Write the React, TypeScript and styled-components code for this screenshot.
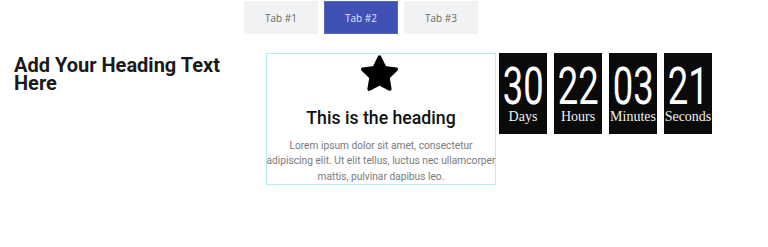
import * as React from 'react';
import styled, { createGlobalStyle } from 'styled-components';

const GlobalStyle = createGlobalStyle`
  html, body {
    margin: 0;
    padding: 0;
    background: #fff;
    font-family: Roboto, "Liberation Sans", sans-serif;
  }
`;

const Page = styled.div`
  width: 768px;
  height: 247px;
  overflow: hidden;
`;

const TabBar = styled.div`
  display: flex;
  gap: 6px;
  padding: 1px 0 0 244px;
`;

const Tab = styled.div<{ $active?: boolean }>`
  width: 74px;
  height: 33px;
  box-sizing: border-box;
  display: flex;
  align-items: center;
  justify-content: center;
  font-family: "Open Sans", sans-serif;
  font-size: 10px;
  color: ${p => (p.$active ? '#e4e6f4' : '#6a6a6a')};
  background: ${p => (p.$active ? '#3f51b5' : '#f1f2f4')};
  border: 1px solid ${p => (p.$active ? '#5565c0' : '#f1f2f4')};
`;

const Content = styled.div`
  display: flex;
  padding-top: 19px;
`;

const HeadingCol = styled.div`
  flex: 0 0 266px;
  box-sizing: border-box;
  padding: 3px 20px 0 14px;
`;

const MainHeading = styled.h2`
  margin: 0;
  font-size: 20px;
  line-height: 18px;
  font-weight: 700;
  color: #1a1a1a;
`;

const IconBox = styled.div`
  flex: 0 0 230px;
  height: 132px;
  box-sizing: border-box;
  border: 1px solid #b9ecfa;
  display: flex;
  flex-direction: column;
  align-items: center;
  text-align: center;
`;

const StarIcon = styled.svg`
  width: 39px;
  height: 39px;
  margin-left: -4px;
`;

const BoxTitle = styled.h3`
  margin: 14px 0 0;
  font-size: 17.7px;
  line-height: 22px;
  font-weight: 500;
  color: #111;
`;

const BoxText = styled.p`
  margin: 9px -4px 0;
  font-size: 10.2px;
  line-height: 15.5px;
  color: #7a7a7a;
  white-space: nowrap;
`;

const Countdown = styled.div`
  display: flex;
  gap: 7px;
  margin-left: 3px;
`;

const Unit = styled.div`
  width: 48px;
  height: 81px;
  background: #0a0a0a;
  display: flex;
  flex-direction: column;
  align-items: center;
  overflow: hidden;
`;

const Digits = styled.span`
  display: block;
  margin-top: 14px;
  font-size: 52px;
  line-height: 40px;
  font-weight: 400;
  color: #fff;
  transform: scaleX(0.7);
  white-space: nowrap;
`;

const UnitLabel = styled.span`
  display: block;
  margin-top: 3px;
  font-family: "Liberation Serif", serif;
  font-size: 14px;
  line-height: 14px;
  color: #f0f0f0;
  white-space: nowrap;
`;

const units = [
  { value: '30', label: 'Days' },
  { value: '22', label: 'Hours' },
  { value: '03', label: 'Minutes' },
  { value: '21', label: 'Seconds' },
];

export default function App() {
  return (
    <Page>
      <GlobalStyle />
      <TabBar>
        <Tab>Tab #1</Tab>
        <Tab $active>Tab #2</Tab>
        <Tab>Tab #3</Tab>
      </TabBar>
      <Content>
        <HeadingCol>
          <MainHeading>Add Your Heading Text Here</MainHeading>
        </HeadingCol>
        <IconBox>
          <StarIcon viewBox="0 0 100 100">
            <polygon
              points="50,8 63.5,35.4 93.7,39.8 71.9,61.1 77,91.2 50,77 23,91.2 28.1,61.1 6.3,39.8 36.5,35.4"
              fill="#000"
              stroke="#000"
              strokeWidth="9"
              strokeLinejoin="round"
            />
          </StarIcon>
          <BoxTitle>This is the heading</BoxTitle>
          <BoxText>
            Lorem ipsum dolor sit amet, consectetur<br />
            adipiscing elit. Ut elit tellus, luctus nec ullamcorper<br />
            mattis, pulvinar dapibus leo.
          </BoxText>
        </IconBox>
        <Countdown>
          {units.map(u => (
            <Unit key={u.label}>
              <Digits>{u.value}</Digits>
              <UnitLabel>{u.label}</UnitLabel>
            </Unit>
          ))}
        </Countdown>
      </Content>
    </Page>
  );
}
